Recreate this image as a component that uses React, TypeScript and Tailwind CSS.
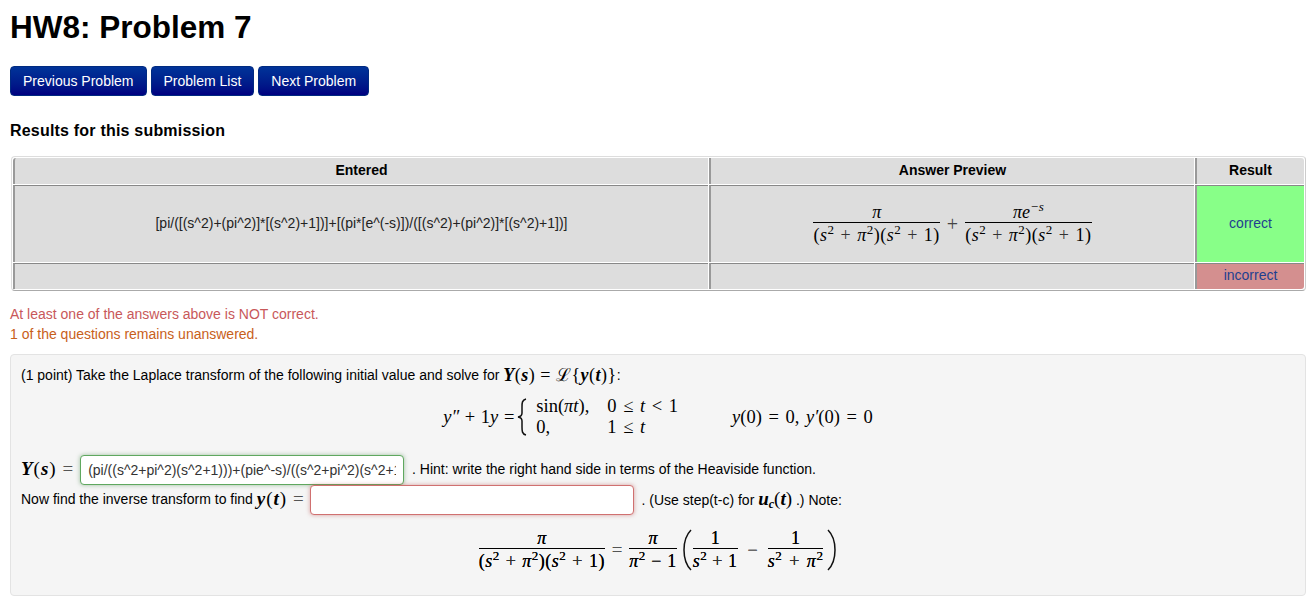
import type { ReactNode } from "react";

const serif = "font-['Liberation_Serif',serif]";
const heavy = "[text-shadow:0_0_0.6px_#000]";

function Frac({ top, bottom, className = "" }: { top: ReactNode; bottom: ReactNode; className?: string }) {
  return (
    <span className={`inline-flex flex-col items-center align-middle ${className}`}>
      <span className="h-[21px] leading-[22px] whitespace-nowrap">{top}</span>
      <span className="w-full h-[1px] bg-black" />
      <span className="h-[24px] leading-[24px] whitespace-nowrap tracking-[0.500px]">{bottom}</span>
    </span>
  );
}

function I({ children }: { children: ReactNode }) {
  return <i className="font-bold">{children}</i>;
}

function Sq({ children }: { children: ReactNode }) {
  return <sup className="text-[13px] font-normal top-[-7px]">{children}</sup>;
}

function Plus({ sign = "+", className = "mx-[6px]" }: { sign?: string; className?: string }) {
  return <span className={`${className} text-[#333333]`}>{sign}</span>;
}

function Den() {
  return (
    <>
      (<i>s</i><Sq>2</Sq><Plus /><i>π</i><Sq>2</Sq>)(<i>s</i><Sq>2</Sq><Plus />1)
    </>
  );
}

function Brace() {
  return (
    <svg width="10" height="38" viewBox="0 0 10 38" className="inline-block">
      <path d="M9 1C5 2 5 5 5 9v6c0 2-1 3.500-4 4 3 .5 4 2 4 4v6c0 4 0 7 4 8" fill="none" stroke="#111" strokeWidth="1.500" />
    </svg>
  );
}

function BigParen({ flip = false, className = "" }: { flip?: boolean; className?: string }) {
  return (
    <svg width="10" height="42" viewBox="0 0 10 42" className={`inline-block align-middle ${flip ? "-scale-x-100" : ""} ${className}`}>
      <path d="M9 1C3 7 2 14 2 21s1 14 7 20" fill="none" stroke="#111" strokeWidth="1.500" />
    </svg>
  );
}

const cell = "bg-[#dddddd] border-l-2 border-l-[#999999] border-t border-t-[#888888]";

export default function App() {
  return (
    <div className="bg-white h-[600px] overflow-hidden pl-[10px] pr-[2px] font-['Liberation_Sans',sans-serif] text-black">
      <h1 className="h-[66px] pt-[9px] text-[31.500px] leading-[36px] font-bold">HW8: Problem 7</h1>

      <div className="flex gap-[4px]">
        {["Previous Problem", "Problem List", "Next Problem"].map((label) => (
          <button key={label} className="h-[30px] px-[12px] rounded-[4px] border border-[#002a80] bg-gradient-to-b from-[#003399] to-[#000080] text-white text-[14px] leading-[20px]">
            {label}
          </button>
        ))}
      </div>

      <h2 className="mt-[25px] h-[20px] text-[16px] leading-[20px] font-bold tracking-[0.200px]">Results for this submission</h2>

      <div className="mt-[15px] ml-[1px] rounded-[4px] border border-[#dddddd] border-b-[#aaaaaa] border-r-[#cccccc]">
        <table className="w-full table-fixed border-separate border-spacing-[1px] text-[14px] text-center">
          <colgroup>
            <col className="w-[695px]" />
            <col className="w-[485px]" />
            <col />
          </colgroup>
          <thead>
            <tr className="h-[26px] font-bold">
              <th className="bg-[#dddddd] border-l-2 border-l-[#999999] rounded-tl-[3px] pb-[2px]">Entered</th>
              <th className="bg-[#dddddd] border-l-2 border-l-[#999999] pb-[2px]">Answer Preview</th>
              <th className="bg-[#dddddd] border-l-2 border-l-[#999999] rounded-tr-[3px] pb-[2px]">Result</th>
            </tr>
          </thead>
          <tbody>
            <tr className="h-[77px]">
              <td className={`${cell} text-[#222222] pb-[2px]`}>
                [pi/([(s^2)+(pi^2)]*[(s^2)+1])]+[(pi*[e^(-s)])/([(s^2)+(pi^2)]*[(s^2)+1])]
              </td>
              <td className={`${cell} text-[18px] ${serif} whitespace-nowrap`}>
                <Frac top={<i>π</i>} bottom={<Den />} />
                <span className="mx-[7px] text-[#444444] text-[20px] align-middle">+</span>
                <Frac top={<><i>πe</i><sup className="text-[13px] top-[-7px] italic">−s</sup></>} bottom={<Den />} />
              </td>
              <td className="bg-[#88ff88] border-l-2 border-l-[#999999] border-t border-t-[#888888] text-[#1f3f8f] pb-[2px]">correct</td>
            </tr>
            <tr className="h-[26px]">
              <td className={cell} />
              <td className={cell} />
              <td className="bg-[#d48f8f] border-l-2 border-l-[#999999] border-t border-t-[#888888] text-[#1f3f8f] rounded-br-[3px] pb-[2px]">incorrect</td>
            </tr>
          </tbody>
        </table>
      </div>

      <div className="mt-[13px] text-[14px] leading-[20px]">
        <p className="text-[#c8585a]">At least one of the answers above is NOT correct.</p>
        <p className="text-[#c8601a]">1 of the questions remains unanswered.</p>
      </div>

      <div className="mt-[10px] h-[242px] rounded-[4px] border border-[#e3e3e3] bg-[#f5f5f5] px-[10px] text-[14px] leading-[20px]">
        <div className="mt-[9px] h-[22px] flex items-center whitespace-pre">
          (1 point) Take the Laplace transform of the following initial value and solve for{" "}
          <span className={`${serif} text-[18px] tracking-[0.500px]`}><I>Y</I>(<I>s</I>) = ℒ{"{"}<I>y</I>(<I>t</I>){"}"}</span>:
        </div>

        <div className={`mt-[6px] h-[50px] flex items-center justify-center text-[18.500px] ${serif} whitespace-nowrap [word-spacing:2px]`}>
          <span className="[word-spacing:1px]"><i>y″</i> + 1<i>y</i> =</span>
          <span className="ml-[3px] mr-[9px]"><Brace /></span>
          <span className="grid grid-cols-[71px_auto] leading-[21px]">
            <span>sin(<i>πt</i>),</span><span>0 ≤ <i>t</i> &lt; 1</span>
            <span>0,</span><span>1 ≤ <i>t</i></span>
          </span>
          <span className="ml-[54px]"><i>y</i>(0) = 0,  <i>y′</i>(0) = 0</span>
        </div>

        <div className="mt-[13px] h-[30px] flex items-center whitespace-pre">
          <span className={`${serif} text-[19px] tracking-[1px] mb-[2px]`}><I>Y</I>(<I>s</I>) <span className="text-[#555555]">=</span></span>
          <input
            readOnly
            value="(pi/((s^2+pi^2)(s^2+1)))+(pie^-s)/((s^2+pi^2)(s^2+1)))"
            className="ml-[6px] w-[324px] h-[30px] px-[7px] rounded-[4px] border border-[#5fa85f] bg-white text-[14px] text-[#333333] shadow-[0_0_4px_rgba(70,136,71,0.5)] outline-none"
          />
          <span className="ml-[4px] mb-[2px]"> . Hint: write the right hand side in terms of the Heaviside function.</span>
        </div>

        <div className="h-[30px] flex items-center whitespace-pre">
          <span className="mb-[2px]">Now find the inverse transform to find </span>
          <span className={`${serif} text-[19px] tracking-[1px] mb-[2px]`}><I>y</I>(<I>t</I>) <span className="text-[#555555]">=</span></span>
          <input
            readOnly
            value=""
            className="ml-[5px] w-[324px] h-[30px] rounded-[4px] border border-[#d07070] bg-white shadow-[0_0_4px_rgba(185,74,72,0.5)] outline-none"
          />
          <span className="ml-[4px] mb-[2px]"> . (Use step(t-c) for <span className={`${serif} text-[19px]`}><I>u<sub className="text-[12px]">c</sub></I>(<I>t</I>)</span> .) Note:</span>
        </div>

        <div className={`mt-[12px] flex items-center justify-center text-[18px] ${heavy} ${serif} whitespace-nowrap`}>
          <Frac top={<i>π</i>} bottom={<Den />} />
          <span className="mx-[7px] text-[#555555]">=</span>
          <Frac top={<i>π</i>} bottom={<><i>π</i><Sq>2</Sq><Plus sign="−" className="mx-[5.500px]" />1</>} />
          <BigParen className="ml-[5px] mr-[1px]" />
          <Frac top="1" bottom={<><i>s</i><Sq>2</Sq><Plus className="mx-[5px]" />1</>} />
          <span className="mx-[10px] text-[#777777]">−</span>
          <Frac top="1" bottom={<><i>s</i><Sq>2</Sq><Plus className="mx-[7px]" /><i>π</i><Sq>2</Sq></>} />
          <BigParen flip className="ml-[4px]" />
        </div>
      </div>
    </div>
  );
}
